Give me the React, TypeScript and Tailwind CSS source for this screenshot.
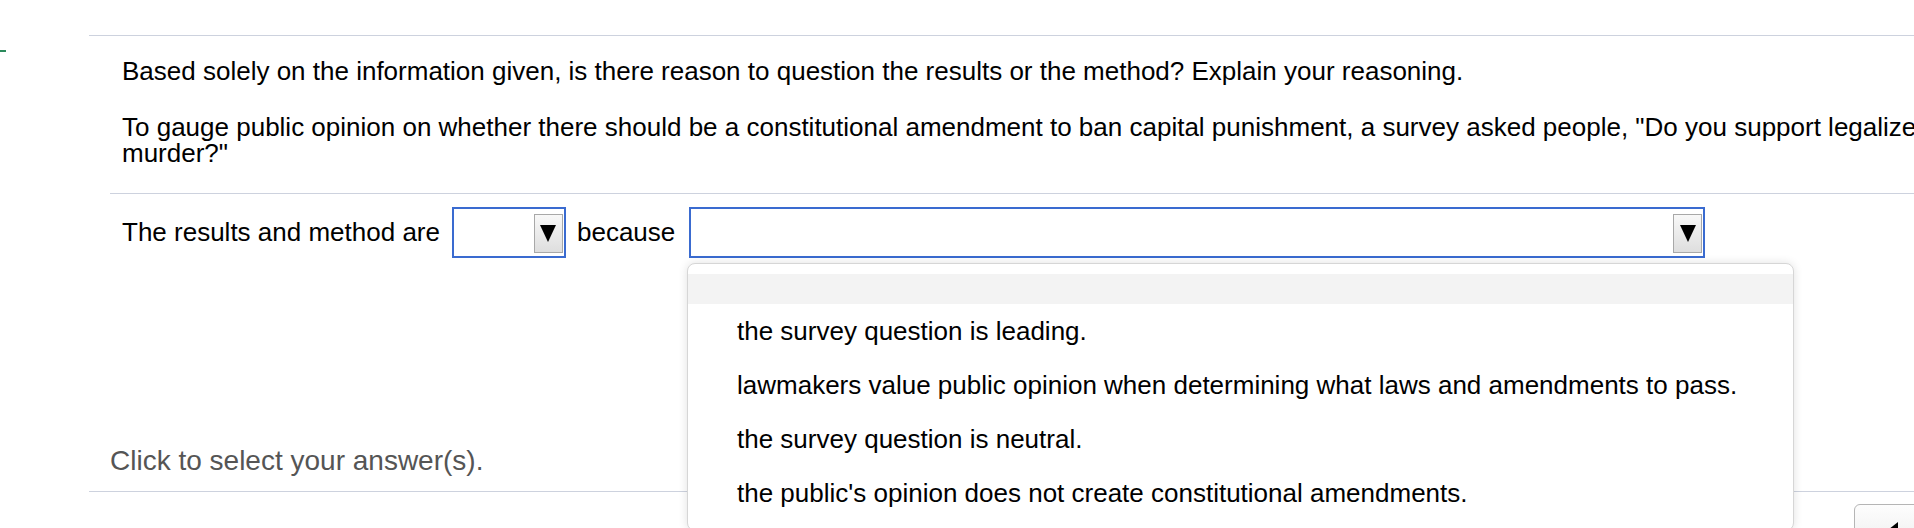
import React from "react";

const options = [
  "the survey question is leading.",
  "lawmakers value public opinion when determining what laws and amendments to pass.",
  "the survey question is neutral.",
  "the public's opinion does not create constitutional amendments.",
];

const Arrow = () => {
  return (
    <svg width="16" height="17" viewBox="0 0 16 17">
      <polygon points="0,0 16,0 8,17" fill="#000" />
    </svg>
  );
};

type SelectBoxProps = {
  width: string;
};

const SelectBox = ({ width }: SelectBoxProps) => {
  return (
    <div
      className={`flex h-[51px] ${width} items-start justify-end border-2 border-[#3a6bd0] bg-white pr-[1px] pt-[5px]`}
    >
      <div className="flex h-[39px] w-[29px] items-center justify-center border border-[#a8a8a8] bg-gradient-to-b from-[#f8f8f8] to-[#dedede]">
        <Arrow />
      </div>
    </div>
  );
};

const DropdownList = () => {
  return (
    <div className="absolute left-[687px] top-[263px] w-[1107px] rounded-[8px] border border-[#d6d6d6] bg-white pt-[10px] pb-[10px] shadow-[0_0_10px_rgba(0,0,0,0.12)]">
      <div className="h-[30px] bg-[#f3f3f3]"></div>
      {options.map((o) => {
        return (
          <div key={o} className="flex h-[54px] items-center pl-[49px] text-[26px] text-black">
            {o}
          </div>
        );
      })}
    </div>
  );
};

const App = () => {
  return (
    <div className="relative h-[528px] w-[1914px] overflow-hidden bg-white font-['Liberation_Sans',Arial,sans-serif] text-black">
      <div className="absolute left-0 top-[50px] h-[2px] w-[6px] bg-[#2b8a5c]"></div>
      <div className="pl-[89px] pt-[35px]">
        <div className="border-t border-[#cdd2de]">
          <div className="pl-[21px]">
            <div className="pl-[12px] pt-[22px] text-[26px] leading-[26px]">
              <p>
                Based solely on the information given, is there reason to question the results or the
                method? Explain your reasoning.
              </p>
              <p className="mt-[30px] whitespace-nowrap">
                To gauge public opinion on whether there should be a constitutional amendment to ban
                capital punishment, a survey asked people, "Do you support legalized
                <br />
                murder?"
              </p>
            </div>
            <div className="mt-[27px] border-t border-[#cdd2de]">
              <div className="flex items-center pl-[12px] pt-[13px] text-[26px]">
                <span className="mr-[12px]">The results and method are</span>
                <SelectBox width="w-[114px]" />
                <span className="ml-[11px] mr-[14px]">because</span>
                <SelectBox width="w-[1016px]" />
              </div>
              <div className="mt-[187px] text-[28px] leading-[32px] text-[#555]">
                Click to select your answer(s).
              </div>
            </div>
          </div>
          <div className="mt-[14px] border-t border-[#cdd2de]">
            <div className="pl-[1765px] pt-[12px]">
              <div className="flex h-[44px] w-[80px] items-start justify-start rounded-[6px] border border-[#b5b5b5] bg-gradient-to-b from-[#fdfdfd] to-[#efefef] pl-[29px] pt-[17px]">
                <svg width="14" height="22" viewBox="0 0 14 22">
                  <polygon points="14,0 14,22 0,11" fill="#000" />
                </svg>
              </div>
            </div>
          </div>
        </div>
      </div>
      <DropdownList />
    </div>
  );
};

export default App;
